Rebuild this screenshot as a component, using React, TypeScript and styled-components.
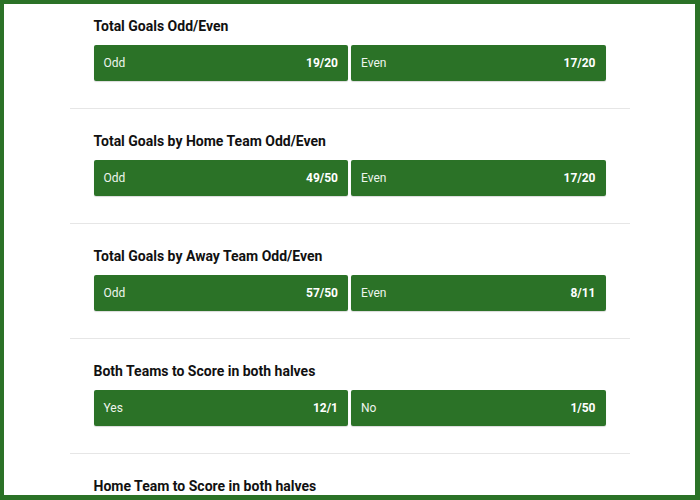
import React from "react";
import styled, { createGlobalStyle } from "styled-components";

const GlobalStyle = createGlobalStyle`
  html, body {
    margin: 0;
    padding: 0;
    background: #ffffff;
  }
  body {
    font-family: Roboto, "Liberation Sans", Arial, sans-serif;
  }
`;

const Frame = styled.div`
  box-sizing: border-box;
  width: 700px;
  height: 500px;
  overflow: hidden;
  background: #ffffff;
  border-style: solid;
  border-color: #2b7227;
  border-width: 4px 5px 5px 4px;
  padding-top: 12px;
`;

const Market = styled.section`
  width: 560px;
  margin: 0 auto;
  padding: 0 24px 27px;
  box-sizing: border-box;
  border-bottom: 1px solid #e6e6e6;

  & + & {
    padding-top: 22px;
  }
`;

const MarketTitle = styled.h3`
  margin: 0 0 9px;
  font-size: 14px;
  line-height: 20px;
  font-weight: 700;
  color: #111111;
`;

const OptionRow = styled.div`
  display: grid;
  grid-template-columns: 1fr 1fr;
  gap: 3px;
`;

const OptionButton = styled.button`
  display: flex;
  align-items: center;
  justify-content: space-between;
  height: 36px;
  padding: 0 10px;
  border: none;
  border-radius: 2px;
  background: #2b7227;
  box-shadow: 0 1px 1px rgba(0, 0, 0, 0.15);
  font-family: inherit;
  font-size: 12px;
  color: #ffffff;
  cursor: pointer;
`;

const OptionLabel = styled.span`
  font-weight: 400;
  color: #eef5ee;
`;

const OptionPrice = styled.span`
  font-weight: 700;
`;

// the last market runs past the bottom edge, only its title shows
const markets: { title: string; options: [string, string][] }[] = [
  { title: "Total Goals Odd/Even", options: [["Odd", "19/20"], ["Even", "17/20"]] },
  { title: "Total Goals by Home Team Odd/Even", options: [["Odd", "49/50"], ["Even", "17/20"]] },
  { title: "Total Goals by Away Team Odd/Even", options: [["Odd", "57/50"], ["Even", "8/11"]] },
  { title: "Both Teams to Score in both halves", options: [["Yes", "12/1"], ["No", "1/50"]] },
  { title: "Home Team to Score in both halves", options: [] },
];

const App: React.FC = () => {
  return (
    <>
      <GlobalStyle />
      <Frame>
        {markets.map((market) => (
          <Market key={market.title}>
            <MarketTitle>{market.title}</MarketTitle>
            {market.options.length > 0 && (
              <OptionRow>
                {market.options.map(([label, price]) => (
                  <OptionButton key={label}>
                    <OptionLabel>{label}</OptionLabel>
                    <OptionPrice>{price}</OptionPrice>
                  </OptionButton>
                ))}
              </OptionRow>
            )}
          </Market>
        ))}
      </Frame>
    </>
  );
};

export default App;
